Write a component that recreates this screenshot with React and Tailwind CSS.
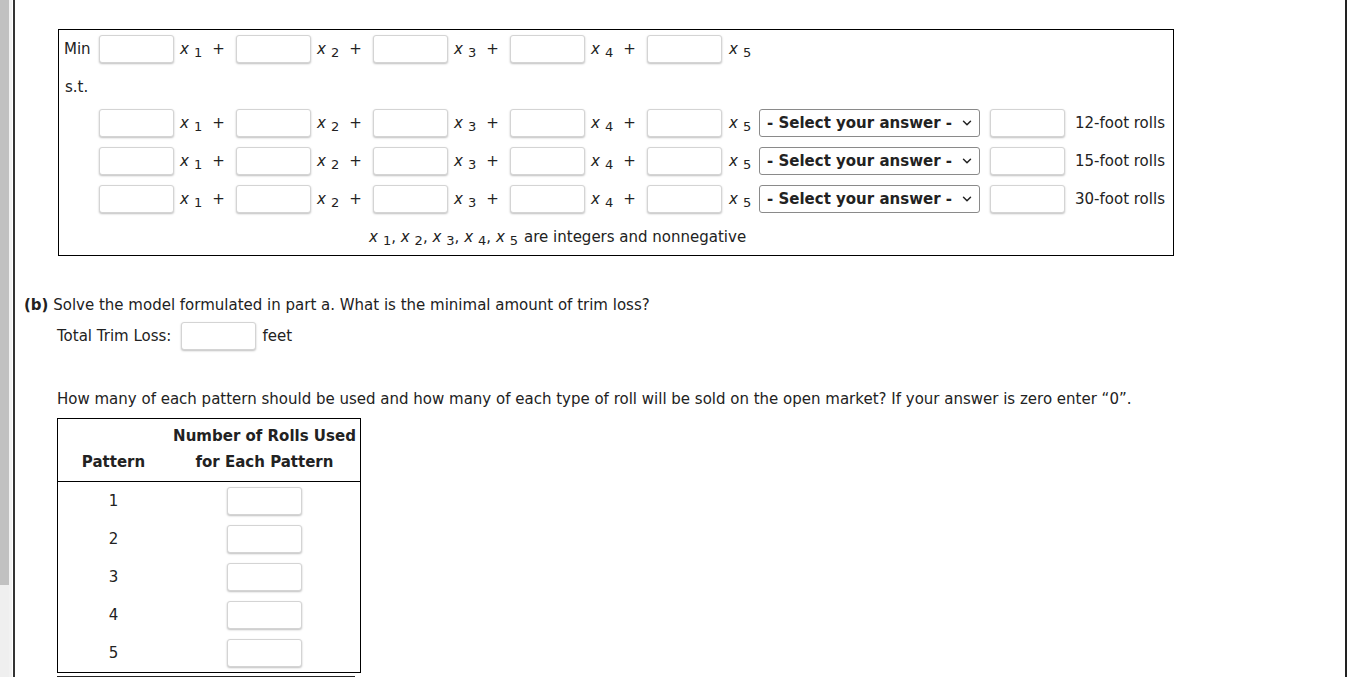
import React from "react";
import { ChevronDown } from "lucide-react";

const inputCls =
  "w-[75px] h-[28px] bg-white border border-[#d4d4d4] rounded-[3px] shadow-[0_1px_2px_rgba(0,0,0,0.25)] outline-none";

function Box({ className = "" }) {
  return <input type="text" className={`${inputCls} ${className}`} />;
}

function Var({ n }) {
  return (
    <span className="whitespace-nowrap">
      <span className="italic">x</span>
      <span className="text-[13px] ml-[5px] relative top-[3px]">{n}</span>
    </span>
  );
}

function Terms() {
  return (
    <>
      {[1, 2, 3, 4].map((n) => (
        <React.Fragment key={n}>
          <Box />
          <span className="ml-[6px] w-[56px] flex items-center">
            <Var n={n} />
            <span className="ml-[10px]">+</span>
          </span>
        </React.Fragment>
      ))}
      <Box />
      <span className="ml-[7px] w-[30px]">
        <Var n={5} />
      </span>
    </>
  );
}

function Picker() {
  return (
    <div className="relative w-[221px] h-[28px]">
      <select className="appearance-none w-full h-full border border-[#8a8a8a] rounded-[3px] bg-white pl-[7px] font-bold text-[15px] text-[#222] outline-none">
        <option>- Select your answer -</option>
      </select>
      <ChevronDown
        size={14}
        strokeWidth={2.5}
        className="absolute right-[6px] top-[7px] text-[#222] pointer-events-none"
      />
    </div>
  );
}

export default function App() {
  const rolls = ["12-foot rolls", "15-foot rolls", "30-foot rolls"];

  return (
    <div
      className="h-[677px] w-[1353px] overflow-hidden bg-white flex text-[15px] leading-[20px] text-[#222]"
      style={{ fontFamily: "'DejaVu Sans', Verdana, sans-serif" }}
    >
      {/* left scrollbar strip */}
      <div className="w-[9px] flex flex-col">
        <div className="h-[585px] bg-[#c1c1c1]" />
        <div className="flex-1 bg-[#efefef]" />
      </div>
      <div className="w-[3px] bg-[#f2f2f2]" />
      <div className="w-[1px] bg-white" />
      <div className="w-[2px] bg-[#333]" />

      {/* main content */}
      <div className="flex-1 pl-[9px]">
        {/* model box */}
        <div className="ml-[34px] mt-[29px] w-[1116px] border border-black pb-[8px]">
          <div className="flex items-center pt-[5px] pl-[5px]">
            <span className="w-[35px]">Min</span>
            <Terms />
          </div>
          <div className="pl-[6px] mt-[14px] h-[20px]">s.t.</div>
          <div className="flex flex-col gap-[10px] mt-[12px]">
            {rolls.map((r) => (
              <div key={r} className="flex items-center pl-[40px]">
                <Terms />
                <Picker />
                <Box className="ml-[10px]" />
                <span className="ml-[10px]">{r}</span>
              </div>
            ))}
          </div>
          <div className="pl-[310px] mt-[14px] h-[20px] flex items-center">
            <Var n={1} />,&nbsp;
            <Var n={2} />,&nbsp;
            <Var n={3} />,&nbsp;
            <Var n={4} />,&nbsp;
            <Var n={5} />
            <span className="ml-[6px]">are integers and nonnegative</span>
          </div>
        </div>

        {/* part b */}
        <p className="mt-[39px]">
          <b>(b)</b> Solve the model formulated in part a. What is the minimal amount of trim loss?
        </p>
        <div className="ml-[33px] mt-[7px] flex items-center">
          <span>Total Trim Loss:</span>
          <Box className="ml-[10px]" />
          <span className="ml-[6px]">feet</span>
        </div>

        <p className="ml-[33px] mt-[39px]">
          How many of each pattern should be used and how many of each type of roll will be sold on
          the open market? If your answer is zero enter “0”.
        </p>

        {/* pattern table */}
        <div className="ml-[33px] mt-[9px] w-[304px] border border-black">
          <div className="flex items-end h-[63px] border-b border-black font-bold pb-[6px]">
            <div className="w-[111px] text-center leading-[26px]">Pattern</div>
            <div className="flex-1 text-center leading-[26px]">
              Number of Rolls Used
              <br />
              for Each Pattern
            </div>
          </div>
          <div>
            {[1, 2, 3, 4, 5].map((n) => (
              <div key={n} className="flex items-center h-[38px]">
                <div className="w-[111px] text-center">{n}</div>
                <div className="flex-1 flex justify-center">
                  <Box />
                </div>
              </div>
            ))}
          </div>
        </div>
        <div className="ml-[33px] mt-[3px] w-[298px] h-[2px] bg-[#222]" />
      </div>

      {/* right edge */}
      <div className="w-[2px] bg-[#222]" />
      <div className="w-[6px] bg-white" />
    </div>
  );
}
